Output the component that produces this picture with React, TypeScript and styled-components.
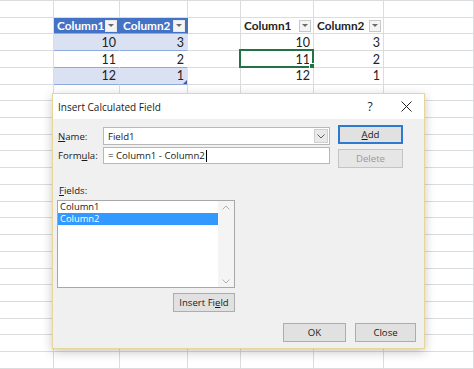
import React from 'react';
import styled, { createGlobalStyle } from 'styled-components';

const GlobalStyle = createGlobalStyle`
  html, body {
    margin: 0;
    padding: 0;
    background: #ffffff;
  }
  body {
    width: 474px;
    height: 369px;
    overflow: hidden;
  }
`;

type CellKind = 'plain' | 'tblHead' | 'tblBand' | 'tblRow' | 'head2';

const colWidths = [54, 66, 68, 53, 73, 70, 90];
const ROWS = 23;

const Page = styled.div`
  position: relative;
  width: 474px;
  height: 369px;
  overflow: hidden;
  font-family: Lato, 'Liberation Sans', sans-serif;
`;

const Sheet = styled.div`
  display: grid;
  grid-template-columns: ${colWidths.map((w) => `${w}px`).join(' ')};
  grid-auto-rows: 16.72px;
  border-top: 1px solid #dadcdd;
`;

const isHead = (k: CellKind) => k === 'tblHead' || k === 'head2';

const Cell = styled.div<{ $kind: CellKind; $align?: 'left' | 'right' }>`
  box-sizing: border-box;
  position: relative;
  display: flex;
  align-items: center;
  justify-content: ${(p) => (p.$align === 'right' ? 'flex-end' : 'flex-start')};
  padding: 0 3px;
  font-size: ${(p) => (isHead(p.$kind) ? 11.8 : 12.5)}px;
  white-space: nowrap;
  color: ${(p) => (p.$kind === 'tblHead' ? '#ffffff' : '#222222')};
  font-weight: ${(p) => (isHead(p.$kind) ? 700 : 400)};
  background: ${(p) =>
    p.$kind === 'tblHead' ? '#4472c4' : p.$kind === 'tblBand' ? '#d9e1f2' : '#ffffff'};
  border-right: 1px solid
    ${(p) =>
      p.$kind === 'tblHead'
        ? '#4472c4'
        : p.$kind === 'tblBand'
          ? '#d9e1f2'
          : p.$kind === 'tblRow'
            ? '#ffffff'
            : '#dadcdd'};
  border-bottom: 1px solid
    ${(p) => (p.$kind === 'tblHead' || p.$kind === 'tblBand' || p.$kind === 'tblRow' ? '#8ea9db' : '#dadcdd')};
`;

const FilterBtn = styled.span<{ $plain?: boolean }>`
  position: absolute;
  right: 2px;
  top: 2px;
  width: 12px;
  height: 12px;
  box-sizing: border-box;
  background: #f4f4f4;
  border: 1px solid ${(p) => (p.$plain ? '#c8c8c8' : '#e8e8e8')};
  display: flex;
  align-items: center;
  justify-content: center;
  &::after {
    content: '';
    border-left: 3px solid transparent;
    border-right: 3px solid transparent;
    border-top: 3px solid #6a6a6a;
  }
`;

const SelectedFrame = styled.span`
  position: absolute;
  left: -2px;
  top: -2px;
  right: -1px;
  bottom: -1px;
  border: 2px solid #217346;
  pointer-events: none;
  &::after {
    content: '';
    position: absolute;
    right: -4px;
    bottom: -4px;
    width: 5px;
    height: 5px;
    background: #217346;
    border: 1px solid #fff;
  }
`;

const ResizeMark = styled.span`
  position: absolute;
  right: 0;
  bottom: 0;
  width: 0;
  height: 0;
  border-left: 4px solid transparent;
  border-bottom: 4px solid #3a5fa8;
`;

/* dialog */

const Dialog = styled.div`
  position: absolute;
  left: 52px;
  top: 93px;
  width: 373px;
  height: 256px;
  box-sizing: border-box;
  border: 1px solid #e6d69a;
  background: #f0f0f0;
  box-shadow: 0 3px 10px rgba(0, 0, 0, 0.22);
  font-family: 'Open Sans', 'Noto Sans', sans-serif;
  font-size: 9.6px;
  color: #1a1a1a;
  display: flex;
  flex-direction: column;
`;

const TitleBar = styled.div`
  height: 25px;
  flex: none;
  background: #ffffff;
  display: flex;
  align-items: center;
  padding-left: 5px;
  font-size: 10px;
`;

const TitleText = styled.span`
  flex: 1;
`;

const TitleIcon = styled.span`
  width: 36px;
  height: 25px;
  display: flex;
  align-items: center;
  justify-content: center;
  font-size: 12px;
  color: #222;
`;

const Body = styled.div`
  flex: 1;
  display: flex;
  flex-direction: column;
  padding: 8px 7px 6px 4px;
`;

const TopArea = styled.div`
  display: flex;
  gap: 8px;
`;

const Form = styled.div`
  display: flex;
  flex-direction: column;
  gap: 2px;
  padding-left: 1px;
`;

const FormRow = styled.div`
  display: flex;
  align-items: center;
`;

const Label = styled.label`
  width: 45px;
  flex: none;
`;

const Input = styled.div<{ $combo?: boolean }>`
  position: relative;
  box-sizing: border-box;
  width: 227px;
  height: ${(p) => (p.$combo ? 18 : 17)}px;
  background: #ffffff;
  border: 1px solid #b8b8b8;
  display: flex;
  align-items: center;
  padding-left: 4px;
`;

const Caret = styled.span`
  display: inline-block;
  width: 1px;
  height: 12px;
  background: #000;
  margin-left: 1px;
`;

const ComboBtn = styled.span`
  position: absolute;
  right: 1px;
  top: 1px;
  bottom: 1px;
  width: 14px;
  box-sizing: border-box;
  border: 1px solid #cfcfcf;
  background: #e9e9e9;
  display: flex;
  align-items: center;
  justify-content: center;
`;

const SideButtons = styled.div`
  display: flex;
  flex-direction: column;
  gap: 5px;
  margin-top: -2px;
`;

const Button = styled.button<{ $w: number; $default?: boolean; $disabled?: boolean }>`
  box-sizing: border-box;
  width: ${(p) => p.$w}px;
  height: 19px;
  padding: 0;
  font-family: inherit;
  font-size: 9.6px;
  color: ${(p) => (p.$disabled ? '#9a9a9a' : '#1a1a1a')};
  background: #e1e1e1;
  border: ${(p) => (p.$default ? '2px solid #2f7ad1' : '1px solid #adadad')};
  ${(p) => (p.$disabled ? 'border-color: #c4c4c4; background: #e6e6e6;' : '')}
`;

const FieldsLabel = styled.div`
  margin-top: 16px;
  padding-left: 2px;
`;

const FieldsArea = styled.div`
  display: flex;
  flex-direction: column;
  align-items: flex-end;
  width: 178px;
  margin-top: 3px;
  gap: 5px;
`;

const ListBox = styled.div`
  box-sizing: border-box;
  width: 178px;
  height: 88px;
  background: #ffffff;
  border: 1px solid #a8a8a8;
  display: flex;
`;

const ListItems = styled.div`
  flex: 1;
  display: flex;
  flex-direction: column;
`;

const ListItem = styled.div<{ $selected?: boolean }>`
  height: 12px;
  line-height: 12px;
  font-size: 9.4px;
  padding-left: 2px;
  background: ${(p) => (p.$selected ? '#3399ff' : 'transparent')};
  color: ${(p) => (p.$selected ? '#ffffff' : '#1a1a1a')};
`;

const ScrollBar = styled.div`
  width: 16px;
  display: flex;
  flex-direction: column;
  justify-content: space-between;
  align-items: center;
  padding: 4px 0 3px;
  background: #f4f4f4;
`;

const Footer = styled.div`
  margin-top: auto;
  display: flex;
  justify-content: flex-end;
  gap: 9px;
  padding-right: 1px;
`;

const Chevron: React.FC<{ up?: boolean; color?: string }> = ({ up, color = '#b0b0b0' }) => (
  <svg width="8" height="5" viewBox="0 0 8 5">
    <path
      d={up ? 'M0.5 4.5 L4 1 L7.5 4.5' : 'M0.5 0.5 L4 4 L7.5 0.5'}
      fill="none"
      stroke={color}
      strokeWidth="1"
    />
  </svg>
);

const CloseGlyph = () => (
  <svg width="11" height="11" viewBox="0 0 11 11">
    <path d="M0.5 0.5 L10.5 10.5 M10.5 0.5 L0.5 10.5" stroke="#222" strokeWidth="1" />
  </svg>
);

type CellDef = {
  text?: string;
  kind: CellKind;
  align?: 'left' | 'right';
  filter?: 'blue' | 'plain';
  selected?: boolean;
  mark?: boolean;
};

const buildRows = (): CellDef[][] => {
  const rows: CellDef[][] = [];
  for (let r = 0; r < ROWS; r++) {
    rows.push(colWidths.map(() => ({ kind: 'plain' as CellKind })));
  }
  rows[1][1] = { text: 'Column1', kind: 'tblHead', filter: 'blue' };
  rows[1][2] = { text: 'Column2', kind: 'tblHead', filter: 'blue' };
  rows[1][4] = { text: 'Column1', kind: 'head2', filter: 'plain' };
  rows[1][5] = { text: 'Column2', kind: 'head2', filter: 'plain' };
  const data = [
    ['10', '3'],
    ['11', '2'],
    ['12', '1'],
  ];
  data.forEach(([a, b], i) => {
    const kind: CellKind = i % 2 === 0 ? 'tblBand' : 'tblRow';
    rows[2 + i][1] = { text: a, kind, align: 'right' };
    rows[2 + i][2] = { text: b, kind, align: 'right', mark: i === 2 };
    rows[2 + i][4] = { text: a, kind: 'plain', align: 'right', selected: i === 1 };
    rows[2 + i][5] = { text: b, kind: 'plain', align: 'right' };
  });
  return rows;
};

const sheetRows = buildRows();

export default function App() {
  return (
    <Page>
      <GlobalStyle />
      <Sheet>
        {sheetRows.map((row, r) =>
          row.map((c, ci) => (
            <Cell key={`${r}-${ci}`} $kind={c.kind} $align={c.align}>
              {c.text}
              {c.filter && <FilterBtn $plain={c.filter === 'plain'} />}
              {c.selected && <SelectedFrame />}
              {c.mark && <ResizeMark />}
            </Cell>
          ))
        )}
      </Sheet>

      <Dialog>
        <TitleBar>
          <TitleText>Insert Calculated Field</TitleText>
          <TitleIcon>?</TitleIcon>
          <TitleIcon>
            <CloseGlyph />
          </TitleIcon>
        </TitleBar>
        <Body>
          <TopArea>
            <Form>
              <FormRow>
                <Label>
                  <u>N</u>ame:
                </Label>
                <Input $combo>
                  Field1
                  <ComboBtn>
                    <Chevron color="#606060" />
                  </ComboBtn>
                </Input>
              </FormRow>
              <FormRow>
                <Label>
                  Form<u>u</u>la:
                </Label>
                <Input>
                  = Column1 - Column2
                  <Caret />
                </Input>
              </FormRow>
            </Form>
            <SideButtons>
              <Button $w={65} $default>
                <u>A</u>dd
              </Button>
              <Button $w={65} $disabled>
                Delete
              </Button>
            </SideButtons>
          </TopArea>

          <FieldsLabel>
            <u>F</u>ields:
          </FieldsLabel>
          <FieldsArea>
            <ListBox>
              <ListItems>
                <ListItem>Column1</ListItem>
                <ListItem $selected>Column2</ListItem>
              </ListItems>
              <ScrollBar>
                <Chevron up />
                <Chevron />
              </ScrollBar>
            </ListBox>
            <Button $w={62}>
              Insert Fi<u>e</u>ld
            </Button>
          </FieldsArea>

          <Footer>
            <Button $w={63}>OK</Button>
            <Button $w={61}>Close</Button>
          </Footer>
        </Body>
      </Dialog>
    </Page>
  );
}
